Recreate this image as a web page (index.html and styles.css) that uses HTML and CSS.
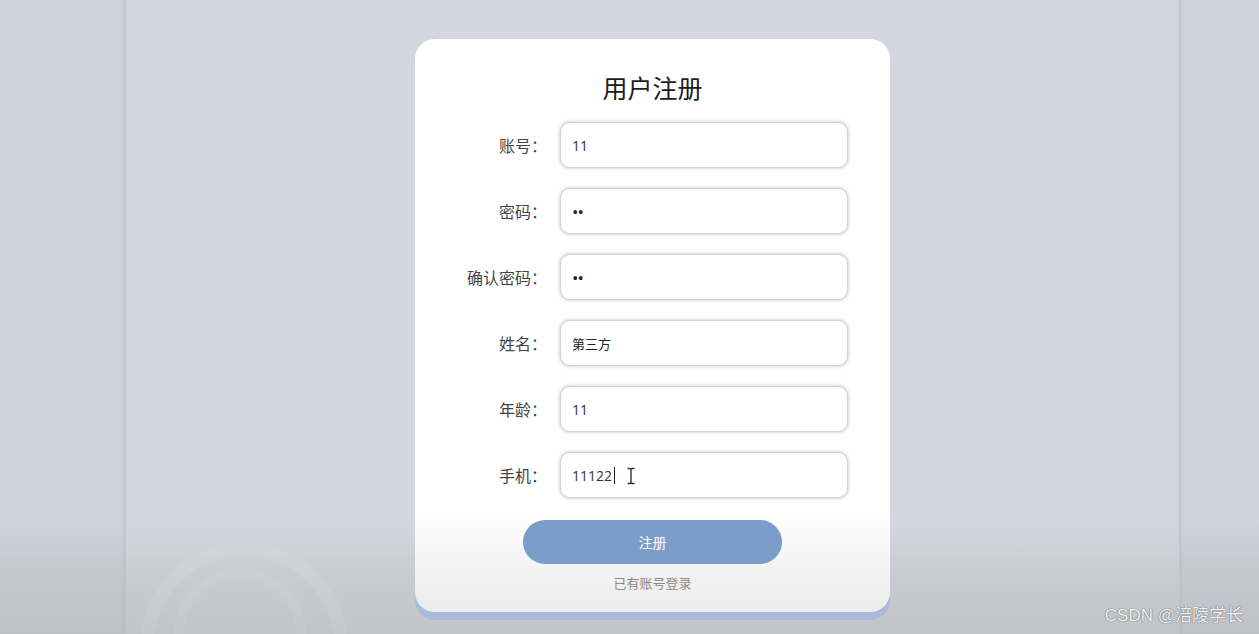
FILE: index.html
```html
<!DOCTYPE html>
<html lang="zh-CN">
<head>
<meta charset="utf-8">
<title>用户注册</title>
<link rel="stylesheet" href="styles.css">
</head>
<body>
<div class="side side-left"></div>
<main class="stage">
  <div class="deco deco-outer"></div>
  <div class="deco deco-inner"></div>
  <form class="card">
    <h1 class="title">用户注册</h1>
    <div class="row"><label class="label">账号：</label><input class="field" type="text" value="11"></div>
    <div class="row"><label class="label">密码：</label><input class="field pw" type="text" value="••"></div>
    <div class="row"><label class="label">确认密码：</label><input class="field pw" type="text" value="••"></div>
    <div class="row"><label class="label">姓名：</label><input class="field cn" type="text" value="第三方"></div>
    <div class="row"><label class="label">年龄：</label><input class="field" type="text" value="11"></div>
    <div class="row">
      <label class="label">手机：</label>
      <div class="field-wrap">
        <input class="field" type="text" value="11122">
        <span class="caret"></span>
        <svg class="ibeam" width="10" height="18" viewBox="0 0 10 18"><path d="M1.5 1.5h2.5l1 1 1-1h2.5M5 2.5v13M1.5 16.5h2.5l1-1 1 1h2.5" fill="none" stroke="#333" stroke-width="1.4"/></svg>
      </div>
    </div>
    <button class="submit" type="button">注册</button>
    <a class="login-link">已有账号登录</a>
  </form>
</main>
<div class="side side-right"></div>
<div class="watermark">CSDN @涪陵学长</div>
</body>
</html>
```

FILE: styles.css
```css
html, body {
  margin: 0;
  height: 100%;
}
body {
  display: flex;
  height: 634px;
  overflow: hidden;
  font-family: "Open Sans", "Noto Sans CJK SC", sans-serif;
  background: linear-gradient(to bottom, #cfd3dc 0%, #cfd3dc 82%, #c5c8ce 90%, #bec1c7 100%);
  position: relative;
}
.side {
  flex: none;
}
.side-left {
  width: 125px;
}
.side-right {
  width: 79px;
}
.stage {
  flex: 1;
  position: relative;
  overflow: hidden;
  display: flex;
  justify-content: center;
  align-items: flex-start;
  padding-top: 39px;
  border-left: 1px solid #bfc3ca;
  border-right: 1px solid #bfc3ca;
  box-shadow: -2px 0 3px rgba(0,0,0,0.04), 2px 0 3px rgba(0,0,0,0.04);
  background: linear-gradient(to bottom, #d3d6de 0%, #d3d6de 83%, #c9ccd1 90%, #c1c4c8 100%);
}
.deco {
  position: absolute;
  border-radius: 50%;
  border: 14px solid rgba(255,255,255,0.08);
}
.deco-outer {
  left: 14px;
  top: 542px;
  width: 180px;
  height: 180px;
}
.deco-inner {
  left: 48px;
  top: 568px;
  width: 112px;
  height: 112px;
  border-width: 10px;
  border-color: rgba(255,255,255,0.06);
}
.card {
  position: relative;
  width: 475px;
  height: 573px;
  box-sizing: border-box;
  padding-top: 28px;
  border-radius: 20px;
  background: linear-gradient(to bottom, #ffffff 0%, #ffffff 82%, #f3f3f4 92%, #ececed 100%);
  box-shadow: 0 8px 0 #a8bcda;
  display: flex;
  flex-direction: column;
  align-items: stretch;
}
.title {
  margin: 0 0 15px;
  height: 40px;
  line-height: 40px;
  font-size: 25px;
  font-weight: 400;
  color: #1c1c1c;
  text-align: center;
  font-family: "Noto Sans CJK SC", sans-serif;
}
.row {
  display: flex;
  align-items: center;
  gap: 13px;
  height: 46px;
  margin-bottom: 20px;
}
.label {
  width: 132px;
  text-align: right;
  font-size: 16px;
  color: #444;
  font-family: "Noto Sans CJK SC", sans-serif;
  white-space: nowrap;
}
.field-wrap {
  position: relative;
  width: 288px;
  height: 46px;
}
.field {
  box-sizing: border-box;
  width: 288px;
  height: 46px;
  border: 1px solid #d2d2d2;
  border-radius: 10px;
  box-shadow: 0 0 3px 1px rgba(0,0,0,0.16);
  padding: 0 11px;
  font-size: 14px;
  font-family: "Open Sans", "Noto Sans CJK SC", sans-serif;
  color: #333;
  background: #fff;
  outline: none;
}
.field.pw {
  font-size: 17px;
  letter-spacing: -1px;
  color: #222;
}
.field.cn {
  font-size: 13px;
  color: #222;
}
.caret {
  position: absolute;
  left: 54px;
  top: 15px;
  width: 1px;
  height: 17px;
  background: #222;
}
.ibeam {
  position: absolute;
  left: 66px;
  top: 15px;
}
.submit {
  align-self: center;
  margin-top: 2px;
  width: 259px;
  height: 44px;
  border: none;
  border-radius: 22px;
  background: #7b9dc9;
  color: #fff;
  font-size: 14px;
  font-family: "Noto Sans CJK SC", sans-serif;
}
.login-link {
  align-self: center;
  margin-top: 10px;
  line-height: 18px;
  font-size: 13px;
  color: #8a8a8a;
  font-family: "Noto Sans CJK SC", sans-serif;
}
.watermark {
  position: absolute;
  right: 16px;
  bottom: 8px;
  font-family: "Liberation Sans", "Noto Sans CJK SC", sans-serif;
  font-size: 17px;
  color: #f4f4f4;
  text-shadow: 0 0 1px #666, 0 0 1px #666;
}
```
